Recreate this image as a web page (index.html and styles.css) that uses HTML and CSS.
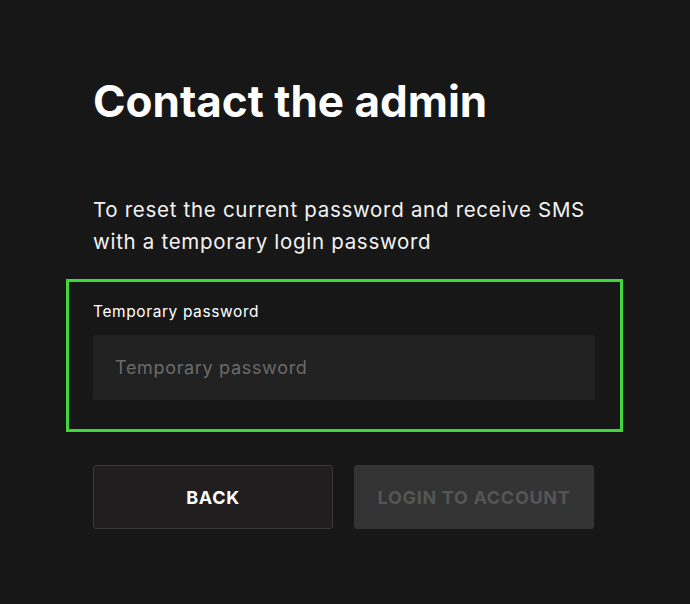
FILE: index.html
```html
<!DOCTYPE html>
<html lang="en">
<head>
<meta charset="utf-8">
<title>Contact the admin</title>
<link rel="stylesheet" href="styles.css">
</head>
<body>
<main class="page">
  <h1 class="title">Contact the admin</h1>
  <p class="lead">To reset the current password and receive SMS with a temporary login password</p>
  <div class="field">
    <label class="field-label" for="tmp">Temporary password</label>
    <input class="field-input" id="tmp" type="password" placeholder="Temporary password">
  </div>
  <div class="actions">
    <button class="btn btn-back" type="button">BACK</button>
    <button class="btn btn-login" type="button" disabled>LOGIN TO ACCOUNT</button>
  </div>
</main>
</body>
</html>
```
FILE: styles.css
```css
html, body {
  margin: 0;
  padding: 0;
  background: #171717;
}
body {
  font-family: Inter, "Noto Sans", "Liberation Sans", sans-serif;
  color: #ffffff;
  width: 690px;
  height: 604px;
  overflow: hidden;
}
.page {
  width: 502px;
  padding: 75px 0 0 93px;
}
.title {
  margin: 0;
  font-size: 44px;
  line-height: 52px;
  font-weight: 700;
  letter-spacing: 0;
  color: #ffffff;
}
.lead {
  margin: 67px 0 0;
  font-size: 20.5px;
  line-height: 32px;
  letter-spacing: 0.7px;
  color: #f2f2f2;
  width: 520px;
}
.field {
  margin: 21px -28px 0 -27px;
  border: 3px solid #3fd83b;
  padding: 21px 25px 29px 24px;
  display: flex;
  flex-direction: column;
  gap: 14px;
}
.field-label {
  font-size: 15.5px;
  line-height: 18px;
  font-weight: 400;
  letter-spacing: 0.6px;
  color: #ffffff;
}
.field-input {
  box-sizing: border-box;
  height: 65px;
  width: 100%;
  border: none;
  outline: none;
  border-radius: 2px;
  background: #222122;
  padding: 0 22px;
  font-family: inherit;
  font-size: 18px;
  letter-spacing: 0.67px;
  color: #ffffff;
}
.field-input::placeholder {
  color: #6a6a6a;
}
.actions {
  margin-top: 33px;
  display: flex;
  gap: 21px;
}
.btn {
  box-sizing: border-box;
  width: 240px;
  height: 64px;
  border-radius: 3px;
  font-family: inherit;
  font-size: 18px;
  font-weight: 700;
  letter-spacing: 0.7px;
  padding: 0;
}
.btn-back {
  background: #201e1f;
  border: 1px solid #3a393a;
  color: #ffffff;
}
.btn-login {
  background: #333333;
  border: 1px solid #353535;
  color: #555555;
}
```
